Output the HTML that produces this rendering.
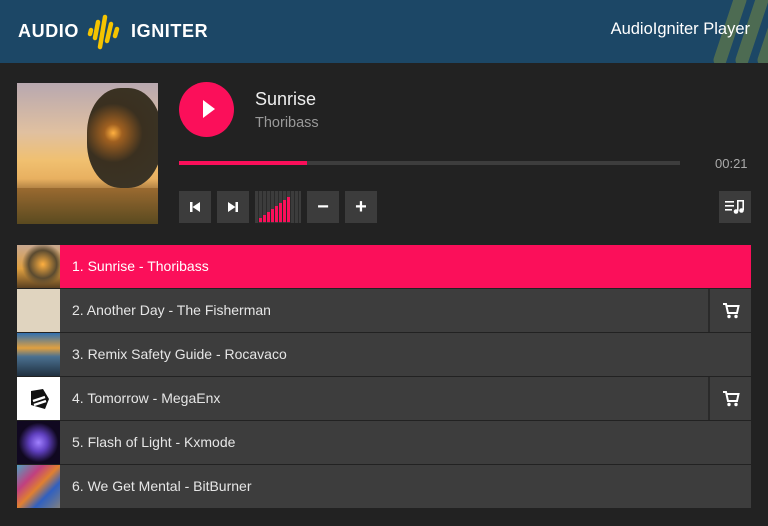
<!DOCTYPE html>
<html><head><meta charset="utf-8"><style>
*{margin:0;padding:0;box-sizing:border-box}
body{width:768px;height:526px;background:#222;font-family:"Liberation Sans",sans-serif;position:relative;overflow:hidden}
.hdr{position:absolute;left:0;top:0;width:768px;height:63px;background:#1c4766;overflow:hidden}
.logo{position:absolute;top:21px;font-weight:bold;color:#fff;font-size:18px;letter-spacing:0.6px}
.ptitle{position:absolute;right:18px;top:20px;color:#fff;font-size:16.5px}
.abs{position:absolute}
.btn{position:absolute;top:191px;width:32px;height:32px;background:#3c3c3c;display:flex;align-items:center;justify-content:center;color:#fff;font-weight:bold;font-size:20px}
.row{position:absolute;left:17px;width:734px;height:43px;background:#3d3d3d}
.row .th{position:absolute;left:0;top:0;width:43px;height:43px}
.row .t{position:absolute;left:55px;top:13px;color:#e6e6e6;font-size:14px}
.cart{position:absolute;right:0;top:0;width:43px;height:43px;border-left:2px solid #2a2a2a;display:flex;align-items:center;justify-content:center}
</style></head><body>
<div class="hdr">
<svg class="abs" style="left:690px;top:-10px" width="90" height="90"><g stroke="#4d6b52" stroke-width="13" stroke-linecap="round"><line x1="30" y1="70" x2="50" y2="10"/><line x1="52" y1="70" x2="72" y2="10"/><line x1="74" y1="70" x2="94" y2="10"/></g></svg>
<div class="logo" style="left:18px">AUDIO</div>
<svg class="abs" style="left:86px;top:14px" width="36" height="36"><g stroke="#f5c400" stroke-width="4.5" stroke-linecap="round"><line x1="5" y1="16" x2="4" y2="20"/><line x1="12" y1="8" x2="9" y2="24"/><line x1="19" y1="3" x2="14" y2="33"/><line x1="25" y1="10" x2="21" y2="27"/><line x1="31" y1="15" x2="29" y2="22"/></g></svg>
<div class="logo" style="left:131px">IGNITER</div>
<div class="ptitle">AudioIgniter Player</div>
</div>
<div class="abs" style="left:17px;top:83px;width:141px;height:141px;overflow:hidden;background:linear-gradient(180deg,#b8a8b0 0%,#e0c0a0 35%,#f0c070 55%,#e8b060 68%,#8a6030 80%,#5a5020 100%)">
<div class="abs" style="left:70px;top:5px;width:75px;height:100px;border-radius:45%;background:radial-gradient(circle at 35% 45%,#ffb040 0%,#a06020 12%,#3a3020 40%,#3a3528 100%)"></div>
<div class="abs" style="left:0;top:105px;width:141px;height:36px;background:linear-gradient(180deg,#9a6a30,#5a4a20)"></div>
</div>
<div class="abs" style="left:179px;top:82px;width:55px;height:55px;border-radius:50%;background:#fb0f5a"></div>
<svg class="abs" style="left:201px;top:99px" width="16" height="20"><path d="M2 1 L14 10 L2 19 Z" fill="#fff"/></svg>
<div class="abs" style="left:255px;top:89px;color:#eee;font-size:18px">Sunrise</div>
<div class="abs" style="left:255px;top:115px;color:#999;font-size:14.5px">Thoribass</div>
<div class="abs" style="left:179px;top:161px;width:501px;height:4px;background:#3d3d3d"></div>
<div class="abs" style="left:179px;top:161px;width:128px;height:4px;background:#fb0f5a"></div>
<div class="abs" style="left:715px;top:156px;color:#aaa;font-size:13px">00:21</div>
<div class="btn" style="left:179px"><svg width="12" height="12"><path d="M1 1h2.5v10H1z M11 1v10L3.5 6z" fill="#fff"/></svg></div>
<div class="btn" style="left:217px"><svg width="12" height="12"><path d="M11 1H8.5v10H11z M1 1v10l7.5-5z" fill="#fff"/></svg></div>
<div class="btn" style="left:255px;width:46px;background:repeating-linear-gradient(90deg,#3c3c3c 0 3px,#2a2a2a 3px 4px)">
<svg class="abs" style="left:3px;top:0" width="42" height="32"><g fill="#fb0f5a"><rect x="1" y="27" width="3" height="4"/><rect x="5" y="24" width="3" height="7"/><rect x="9" y="21" width="3" height="10"/><rect x="13" y="18" width="3" height="13"/><rect x="17" y="15" width="3" height="16"/><rect x="21" y="12" width="3" height="19"/><rect x="25" y="9" width="3" height="22"/><rect x="29" y="6" width="3" height="25"/></g></svg></div>
<div class="btn" style="left:307px">−</div>
<div class="btn" style="left:345px">+</div>
<div class="btn" style="left:719px"><svg width="20" height="16"><g fill="#fff"><rect x="0" y="2" width="9" height="1.6"/><rect x="0" y="6" width="9" height="1.6"/><rect x="0" y="10" width="7" height="1.6"/><rect x="12" y="1" width="1.6" height="11"/><rect x="12" y="1" width="7" height="1.6"/><rect x="17.4" y="1" width="1.6" height="10"/><circle cx="11" cy="12.5" r="2.3"/><circle cx="16.5" cy="11.5" r="2.3"/></g></svg></div>

<div class="row" style="top:245px;background:#fb0f5a"><div class="th" style="background:radial-gradient(circle at 60% 45%,#ffb040 0%,#5a4a30 40%,transparent 60%),linear-gradient(180deg,#c8a890,#e0a040 55%,#5a4020)"></div><div class="t" style="color:#fff">1. Sunrise - Thoribass</div></div>
<div class="row" style="top:289px"><div class="th" style="background:#e0d4bf"></div><div class="t">2. Another Day - The Fisherman</div><div class="cart"><svg width="18" height="16"><path d="M1 1h3l2 9h9l1.5-7H5" stroke="#fff" stroke-width="2" fill="none"/><circle cx="7" cy="13.5" r="1.7" fill="#fff"/><circle cx="14" cy="13.5" r="1.7" fill="#fff"/></svg></div></div>
<div class="row" style="top:333px"><div class="th" style="background:linear-gradient(180deg,#3070b0,#e0a040 35%,#4a7090 55%,#203040)"></div><div class="t">3. Remix Safety Guide - Rocavaco</div></div>
<div class="row" style="top:377px"><div class="th" style="background:#fff"><svg width="43" height="43"><path d="M14 14 L26 12 L32 22 L28 32 L14 28 Z" fill="#111"/><path d="M16 24 L28 20 M17 28 L29 24" stroke="#fff" stroke-width="2.5"/></svg></div><div class="t">4. Tomorrow - MegaEnx</div><div class="cart"><svg width="18" height="16"><path d="M1 1h3l2 9h9l1.5-7H5" stroke="#fff" stroke-width="2" fill="none"/><circle cx="7" cy="13.5" r="1.7" fill="#fff"/><circle cx="14" cy="13.5" r="1.7" fill="#fff"/></svg></div></div>
<div class="row" style="top:421px"><div class="th" style="background:radial-gradient(circle,#a080ff 0%,#6040c0 30%,#100820 65%)"></div><div class="t">5. Flash of Light - Kxmode</div></div>
<div class="row" style="top:465px"><div class="th" style="background:linear-gradient(135deg,#50a0c0,#c04080 30%,#e08030 50%,#3060c0 70%,#808080)"></div><div class="t">6. We Get Mental - BitBurner</div></div>
</body></html>
